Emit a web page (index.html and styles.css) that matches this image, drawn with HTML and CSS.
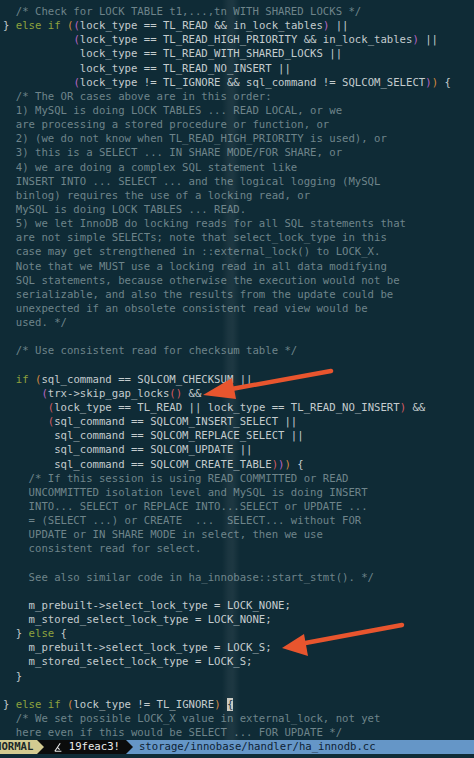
FILE: index.html
```html
<!DOCTYPE html>
<html lang="en">
<head>
<meta charset="utf-8">
<title>ha_innodb.cc</title>
<link rel="stylesheet" href="styles.css">
</head>
<body>
<div class="screen">
  <div class="buffer">
<div class="ln"><span class="c">  /* Check for LOCK TABLE t1,...,tn WITH SHARED LOCKS */</span></div>
<div class="ln">} <span class="k">else if</span> <span class="p1">(</span><span class="p2">(</span>lock_type == TL_READ &amp;&amp; in_lock_tables<span class="p2">)</span> ||</div>
<div class="ln">           <span class="p2">(</span>lock_type == TL_READ_HIGH_PRIORITY &amp;&amp; in_lock_tables<span class="p2">)</span> ||</div>
<div class="ln">            lock_type == TL_READ_WITH_SHARED_LOCKS ||</div>
<div class="ln">            lock_type == TL_READ_NO_INSERT ||</div>
<div class="ln">           <span class="p2">(</span>lock_type != TL_IGNORE &amp;&amp; sql_command != SQLCOM_SELECT<span class="p2">)</span><span class="p1">)</span> {</div>
<div class="ln"><span class="c">  /* The OR cases above are in this order:</span></div>
<div class="ln"><span class="c">  1) MySQL is doing LOCK TABLES ... READ LOCAL, or we</span></div>
<div class="ln"><span class="c">  are processing a stored procedure or function, or</span></div>
<div class="ln"><span class="c">  2) (we do not know when TL_READ_HIGH_PRIORITY is used), or</span></div>
<div class="ln"><span class="c">  3) this is a SELECT ... IN SHARE MODE/FOR SHARE, or</span></div>
<div class="ln"><span class="c">  4) we are doing a complex SQL statement like</span></div>
<div class="ln"><span class="c">  INSERT INTO ... SELECT ... and the logical logging (MySQL</span></div>
<div class="ln"><span class="c">  binlog) requires the use of a locking read, or</span></div>
<div class="ln"><span class="c">  MySQL is doing LOCK TABLES ... READ.</span></div>
<div class="ln"><span class="c">  5) we let InnoDB do locking reads for all SQL statements that</span></div>
<div class="ln"><span class="c">  are not simple SELECTs; note that select_lock_type in this</span></div>
<div class="ln"><span class="c">  case may get strengthened in ::external_lock() to LOCK_X.</span></div>
<div class="ln"><span class="c">  Note that we MUST use a locking read in all data modifying</span></div>
<div class="ln"><span class="c">  SQL statements, because otherwise the execution would not be</span></div>
<div class="ln"><span class="c">  serializable, and also the results from the update could be</span></div>
<div class="ln"><span class="c">  unexpected if an obsolete consistent read view would be</span></div>
<div class="ln"><span class="c">  used. */</span></div>
<div class="ln"></div>
<div class="ln"><span class="c">  /* Use consistent read for checksum table */</span></div>
<div class="ln"></div>
<div class="ln">  <span class="k">if</span> <span class="p1">(</span>sql_command == SQLCOM_CHECKSUM ||</div>
<div class="ln">      <span class="p2">(</span>trx-&gt;skip_gap_locks<span class="p3">()</span> &amp;&amp;</div>
<div class="ln">       <span class="p3">(</span>lock_type == TL_READ || lock_type == TL_READ_NO_INSERT<span class="p3">)</span> &amp;&amp;</div>
<div class="ln">       <span class="p3">(</span>sql_command == SQLCOM_INSERT_SELECT ||</div>
<div class="ln">        sql_command == SQLCOM_REPLACE_SELECT ||</div>
<div class="ln">        sql_command == SQLCOM_UPDATE ||</div>
<div class="ln">        sql_command == SQLCOM_CREATE_TABLE<span class="p3">)</span><span class="p2">)</span><span class="p1">)</span> {</div>
<div class="ln"><span class="c">    /* If this session is using READ COMMITTED or READ</span></div>
<div class="ln"><span class="c">    UNCOMMITTED isolation level and MySQL is doing INSERT</span></div>
<div class="ln"><span class="c">    INTO... SELECT or REPLACE INTO...SELECT or UPDATE ...</span></div>
<div class="ln"><span class="c">    = (SELECT ...) or CREATE  ...  SELECT... without FOR</span></div>
<div class="ln"><span class="c">    UPDATE or IN SHARE MODE in select, then we use</span></div>
<div class="ln"><span class="c">    consistent read for select.</span></div>
<div class="ln"></div>
<div class="ln"><span class="c">    See also similar code in ha_innobase::start_stmt(). */</span></div>
<div class="ln"></div>
<div class="ln">    m_prebuilt-&gt;select_lock_type = LOCK_NONE;</div>
<div class="ln">    m_stored_select_lock_type = LOCK_NONE;</div>
<div class="ln">  } <span class="k">else</span> {</div>
<div class="ln">    m_prebuilt-&gt;select_lock_type = LOCK_S;</div>
<div class="ln">    m_stored_select_lock_type = LOCK_S;</div>
<div class="ln">  }</div>
<div class="ln"></div>
<div class="ln">} <span class="k">else if</span> <span class="p1">(</span>lock_type != TL_IGNORE<span class="p1">)</span> <span class="cur">{</span></div>
<div class="ln"><span class="c">  /* We set possible LOCK_X value in external_lock, not yet</span></div>
<div class="ln"><span class="c">  here even if this would be SELECT ... FOR UPDATE */</span></div>
  </div>
  <div class="status">
    <span class="seg mode">NORMAL</span><span class="sep sep-mode"></span>
    <span class="seg branch"><svg class="branch-icon" width="8" height="10" viewBox="0 0 8 10"><path d="M0.8 9.2 L6.2 1.2 M0.8 9.2 H7.4 M3.6 5.6 L5.6 7.6" fill="none" stroke="#e8e8e8" stroke-width="1.1"/></svg> 19feac3!</span><span class="sep sep-branch"></span>
    <span class="seg file">storage/innobase/handler/ha_innodb.cc</span>
  </div>
  <div class="glare"></div>
  <svg class="arrows" width="474" height="758" viewBox="0 0 474 758">
    <line x1="331" y1="371" x2="226" y2="390" stroke="#e8552e" stroke-width="4.5" stroke-linecap="round"/>
    <polygon points="203,395 232,378 236,399" fill="#e8552e"/>
    <line x1="402" y1="625" x2="300" y2="644" stroke="#e8552e" stroke-width="4.5" stroke-linecap="round"/>
    <polygon points="282,648 304,634 308,656" fill="#e8552e"/>
  </svg>
</div>
</body>
</html>
```

FILE: styles.css
```css
html, body {
  margin: 0;
  padding: 0;
  background: #0f2b36;
}

.screen {
  position: relative;
  width: 474px;
  height: 758px;
  overflow: hidden;
  background: #0f2b36;
  font-family: "DejaVu Sans Mono", "Liberation Mono", monospace;
  font-size: 10.63px;
}

.buffer {
  padding: 5px 0 0 3px;
}

.ln {
  height: 14.15px;
  line-height: 14.15px;
  white-space: pre;
  color: #c4ccce;
}

.c { color: #6e848a; }
.k { color: #8ea23d; }
.p1 { color: #d68a3f; }
.p2 { color: #b866c4; }
.p3 { color: #d65b63; }

.cur {
  background: #c8c8bf;
  color: #0f2b36;
}

.status {
  display: flex;
  align-items: stretch;
  height: 14px;
  line-height: 14px;
  white-space: pre;
}

.seg {
  display: flex;
  align-items: center;
}

.mode {
  margin-left: -5px;
  padding-right: 4px;
  background: #d3cb91;
  color: #1b2829;
  font-weight: bold;
}

.sep {
  width: 0;
  height: 0;
  border-top: 7px solid transparent;
  border-bottom: 7px solid transparent;
  border-left-width: 7px;
  border-left-style: solid;
}

.sep-mode {
  background: #0b0c0c;
  border-left-color: #d3cb91;
}

.branch {
  padding: 0 6px 0 10px;
  background: #0b0c0c;
  color: #ececec;
}

.branch-icon {
  display: block;
}

.sep-branch {
  background: #6596c7;
  border-left-color: #0b0c0c;
}

.file {
  flex: 1;
  padding-left: 6px;
  background: #6596c7;
  color: #0e2234;
}

.glare {
  position: absolute;
  left: 222px;
  top: 0;
  width: 18px;
  height: 741px;
  background: linear-gradient(90deg, rgba(255,255,255,0) 0%, rgba(255,255,255,0.05) 35%, rgba(255,255,255,0.06) 60%, rgba(255,255,255,0) 100%);
  pointer-events: none;
}

.arrows {
  position: absolute;
  left: 0;
  top: 0;
  pointer-events: none;
}
```
